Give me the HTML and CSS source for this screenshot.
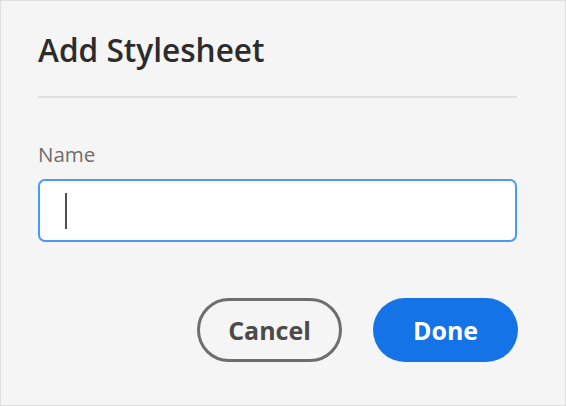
FILE: index.html
```html
<!DOCTYPE html>
<html>
<head>
<meta charset="utf-8">
<link rel="stylesheet" href="styles.css">
</head>
<body>
<div class="dialog">
  <h1 class="title">Add Stylesheet</h1>
  <div class="divider"></div>
  <label class="label" for="name">Name</label>
  <div class="field"><span class="caret"></span></div>
  <div class="actions">
    <button class="btn btn-secondary">Cancel</button>
    <button class="btn btn-primary">Done</button>
  </div>
</div>
</body>
</html>
```

FILE: styles.css
```css
html, body {
  margin: 0;
  padding: 0;
  background: #f5f5f5;
}
.dialog {
  box-sizing: border-box;
  width: 566px;
  height: 406px;
  border: 1px solid #dedede;
  background: #f5f5f5;
  padding: 29px 48px 0 37px;
  display: flex;
  flex-direction: column;
  font-family: "Open Sans", "Noto Sans", sans-serif;
}
.title {
  margin: 0;
  font-size: 31.6px;
  line-height: 40px;
  font-weight: 600;
  color: #2c2c2c;
}
.divider {
  margin-top: 26px;
  height: 2px;
  background: #e1e1e1;
}
.label {
  margin-top: 44px;
  font-size: 20.5px;
  line-height: 24px;
  color: #6e6e6e;
}
.field {
  box-sizing: border-box;
  margin-top: 13px;
  height: 63px;
  background: #ffffff;
  border: 2px solid #4a9af5;
  border-radius: 7px;
  display: flex;
  align-items: center;
  padding-left: 25px;
}
.caret {
  width: 2px;
  height: 36px;
  background: #505050;
}
.actions {
  margin-top: 56px;
  margin-right: -1px;
  display: flex;
  justify-content: flex-end;
  gap: 31px;
}
.btn {
  box-sizing: border-box;
  width: 145px;
  height: 64px;
  border-radius: 32px;
  font-family: "Open Sans", "Noto Sans", sans-serif;
  font-size: 25px;
  font-weight: 700;
  padding: 0;
}
.btn-secondary {
  background: transparent;
  border: 3px solid #6e6e6e;
  color: #4b4b4b;
}
.btn-primary {
  background: #1473e6;
  border: none;
  color: #ffffff;
}
```
